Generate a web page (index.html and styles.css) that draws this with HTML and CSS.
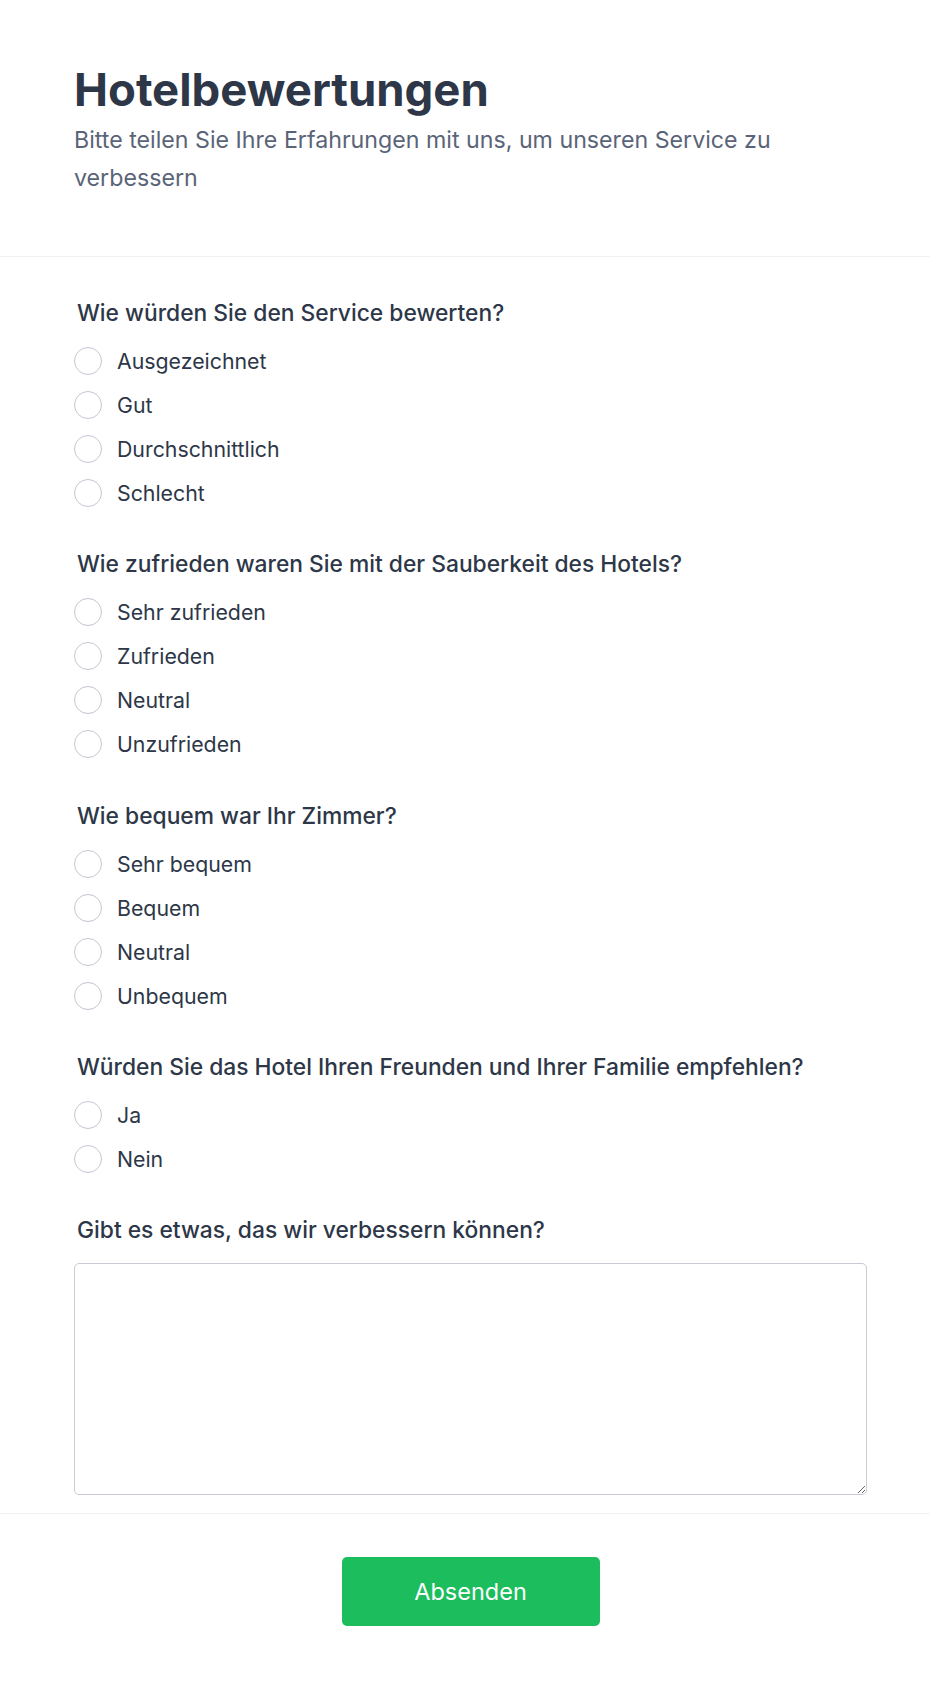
FILE: index.html
```html
<!DOCTYPE html>
<html lang="de">
<head>
<meta charset="utf-8">
<title>Hotelbewertungen</title>
<link rel="stylesheet" href="styles.css">
</head>
<body>
<header class="header">
  <h1 class="title">Hotelbewertungen</h1>
  <p class="subtitle">Bitte teilen Sie Ihre Erfahrungen mit uns, um unseren Service zu verbessern</p>
</header>
<form class="form">
  <section class="questions">
    <fieldset class="question">
      <legend class="label">Wie würden Sie den Service bewerten?</legend>
      <div class="options">
        <label class="option"><input type="radio" name="q1" class="radio"><span>Ausgezeichnet</span></label>
        <label class="option"><input type="radio" name="q1" class="radio"><span>Gut</span></label>
        <label class="option"><input type="radio" name="q1" class="radio"><span>Durchschnittlich</span></label>
        <label class="option"><input type="radio" name="q1" class="radio"><span>Schlecht</span></label>
      </div>
    </fieldset>
    <fieldset class="question">
      <legend class="label">Wie zufrieden waren Sie mit der Sauberkeit des Hotels?</legend>
      <div class="options">
        <label class="option"><input type="radio" name="q2" class="radio"><span>Sehr zufrieden</span></label>
        <label class="option"><input type="radio" name="q2" class="radio"><span>Zufrieden</span></label>
        <label class="option"><input type="radio" name="q2" class="radio"><span>Neutral</span></label>
        <label class="option"><input type="radio" name="q2" class="radio"><span>Unzufrieden</span></label>
      </div>
    </fieldset>
    <fieldset class="question">
      <legend class="label">Wie bequem war Ihr Zimmer?</legend>
      <div class="options">
        <label class="option"><input type="radio" name="q3" class="radio"><span>Sehr bequem</span></label>
        <label class="option"><input type="radio" name="q3" class="radio"><span>Bequem</span></label>
        <label class="option"><input type="radio" name="q3" class="radio"><span>Neutral</span></label>
        <label class="option"><input type="radio" name="q3" class="radio"><span>Unbequem</span></label>
      </div>
    </fieldset>
    <fieldset class="question">
      <legend class="label">Würden Sie das Hotel Ihren Freunden und Ihrer Familie empfehlen?</legend>
      <div class="options">
        <label class="option"><input type="radio" name="q4" class="radio"><span>Ja</span></label>
        <label class="option"><input type="radio" name="q4" class="radio"><span>Nein</span></label>
      </div>
    </fieldset>
    <div class="question question-text">
      <label class="label" for="improve">Gibt es etwas, das wir verbessern können?</label>
      <textarea id="improve" class="textarea"></textarea>
    </div>
  </section>
  <div class="footer">
    <button type="submit" class="submit">Absenden</button>
  </div>
</form>
</body>
</html>
```

FILE: styles.css
```css
* {
  box-sizing: border-box;
}

html, body {
  margin: 0;
  padding: 0;
  background: #ffffff;
}

body {
  font-family: Inter, "Noto Sans", "Liberation Sans", sans-serif;
  color: #2d3748;
}

.header {
  padding: 65px 63px 59px 74px;
  border-bottom: 1px solid #f0f1f5;
}

.title {
  margin: 0;
  font-size: 45.5px;
  line-height: 50px;
  font-weight: 700;
  color: #2d3748;
}

.subtitle {
  margin: 7px 0 0 0;
  font-size: 23.2px;
  line-height: 37.5px;
  color: #5a6478;
}

.form {
  margin: 0;
}

.questions {
  display: flex;
  flex-direction: column;
  gap: 43.3px;
  padding: 42px 63px 18px 74px;
  border-bottom: 1px solid #f0f1f5;
}

.question {
  margin: 0;
  padding: 0;
  border: 0;
  min-width: 0;
  display: flex;
  flex-direction: column;
  gap: 20px;
}

.question-text {
  gap: 19px;
}

.label {
  float: none;
  display: block;
  padding: 0 0 0 3px;
  font-size: 22.8px;
  line-height: 28px;
  font-weight: 500;
  color: #2d3748;
}

fieldset.question > .label {
  margin-bottom: 20px;
}

.options {
  display: flex;
  flex-direction: column;
  gap: 16px;
}

.option {
  display: flex;
  align-items: center;
  gap: 15px;
  height: 28px;
  font-size: 21.3px;
  color: #2d3748;
  cursor: pointer;
}

.radio {
  appearance: none;
  -webkit-appearance: none;
  margin: 0;
  width: 28px;
  height: 28px;
  flex: none;
  border: 1.5px solid #c3c7d1;
  border-radius: 50%;
  background: #ffffff;
}

.radio:checked {
  border: 8px solid #1bbd5c;
}

.textarea {
  display: block;
  width: 100%;
  height: 232px;
  margin: 0;
  border: 1.5px solid #c8cbd4;
  border-radius: 5px;
  font-family: inherit;
  font-size: 20px;
  padding: 10px 14px;
  resize: vertical;
}

.footer {
  display: flex;
  justify-content: center;
  padding: 43px 63px 57px 74px;
}

.submit {
  width: 258px;
  height: 69px;
  border: 0;
  border-radius: 5px;
  background: #1bbd5c;
  color: #ffffff;
  font-family: inherit;
  font-size: 23.5px;
  font-weight: 400;
  cursor: pointer;
}
```
